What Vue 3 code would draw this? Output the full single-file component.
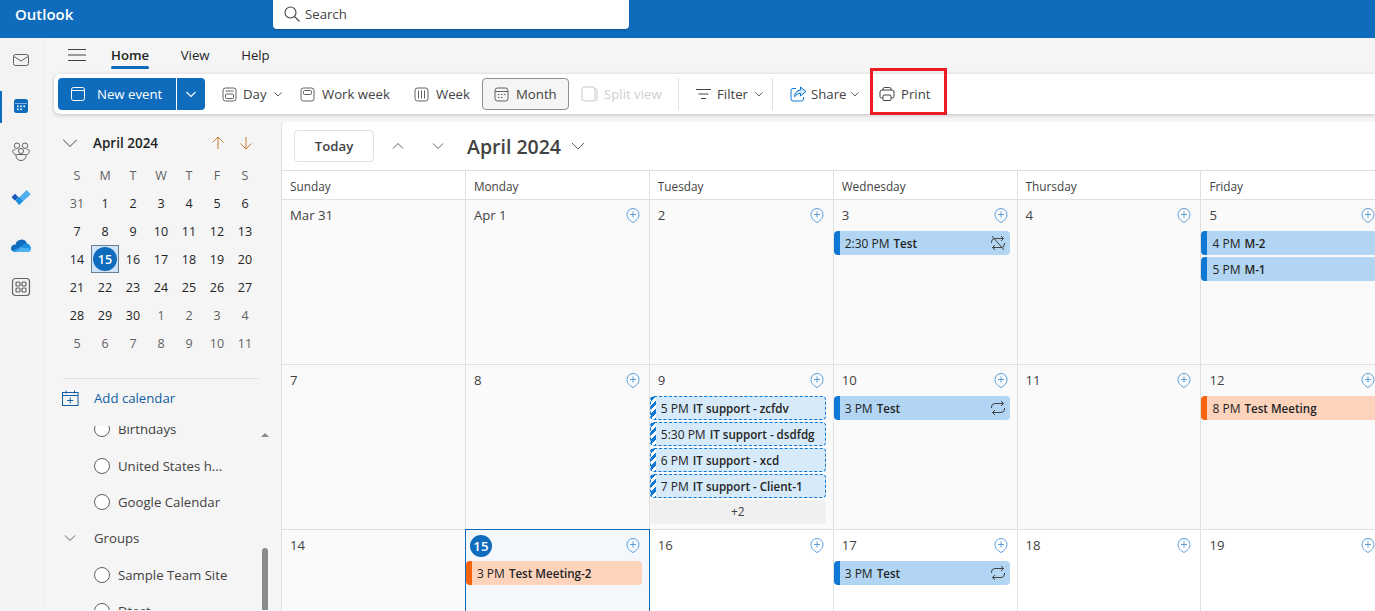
<template>
  <div class="page">
    <header class="topbar">
      <span class="brand">Outlook</span>
      <div class="search">
        <svg width="18" height="18" viewBox="0 0 18 18" fill="none" stroke="#424242" stroke-width="1.1"><circle cx="7.5" cy="7.5" r="5.5" /><path d="M11.5 11.5l5 5" /></svg>
        <span>Search</span>
      </div>
    </header>

    <div class="body">
      <nav class="rail">
        <i class="rail-active"></i>
        <svg class="rail-icon" width="20" height="20" viewBox="0 0 20 20" fill="none" stroke="#616161"><rect x="2.5" y="4.5" width="15" height="11" rx="2" /><path d="M3 6.5l7 4.5 7-4.500" /></svg>
        <svg class="rail-icon" width="20" height="20" viewBox="0 0 20 20"><rect x="3" y="3" width="14" height="14" rx="2.5" fill="#0f6cbd" /><rect x="4" y="7" width="12" height="1" fill="#7fb4e4" /><g fill="#fff"><rect x="6" y="9.500" width="1.600" height="1.600" /><rect x="9.200" y="9.500" width="1.600" height="1.600" /><rect x="12.400" y="9.500" width="1.600" height="1.600" /><rect x="6" y="12.500" width="1.600" height="1.600" /><rect x="9.200" y="12.500" width="1.600" height="1.600" /></g></svg>
        <svg class="rail-icon people" width="20" height="20" viewBox="-1 0 20 20" fill="none" stroke="#616161"><circle cx="5" cy="3.700" r="2.700" /><circle cx="13" cy="3.700" r="2.700" /><circle cx="9" cy="9" r="2.500" /><path d="M3.300 7.500H2.500C1.500 7.500 .8 8.300 .8 9.200.8 11 2 12.500 4 12.800M14.700 7.500h.8c1 0 1.700.8 1.700 1.700 0 1.800-1.200 3.300-3.200 3.600" /><path d="M4 13.500c0-.5.5-1 1-1h8c.5 0 1 .5 1 1 0 3-2 5-5 5s-5-2-5-5z" /></svg>
        <svg class="rail-icon todo" width="20" height="19" viewBox="0 0 20 19"><polygon points="8,16 19.700,5.300 15.700,1 6.500,10" fill="#50aeef" /><polygon points="4.500,11.500 8,8 12,12 8,16" fill="#1f8ee0" /><polygon points="0.500,8.300 4,4.800 7.500,8.300 4,11.800" fill="#185abd" /></svg>
        <svg class="rail-icon cloud" width="20" height="14" viewBox="0 0 20 14"><path d="M16 5.500A6 6 0 0 0 4.500 6.500C2 6.500 0 8 0 10.300 0 11.500.5 12.500 1.300 13L11 8.500z" fill="#0f6cbd" /><path d="M16 5.500c-2.500-.2-4 .8-5.500 2.500L1.300 13c.5.5 1.500 1 2.700 1h13c1.700 0 3-1.300 3-3.200 0-2.800-2-5.100-4-5.300z" fill="#1f8fe0" /><path d="M4 14h13c1.500 0 3-1.300 3-3.200L10 9.500z" fill="#4fb2f0" /></svg>
        <svg class="rail-icon" width="20" height="20" viewBox="0 0 20 20" fill="none" stroke="#616161" stroke-width="1.200"><rect x="1.500" y="1.500" width="17" height="17" rx="3" /><rect x="5" y="5" width="4" height="4" rx="1" /><rect x="11" y="5" width="4" height="4" rx="1" /><rect x="5" y="11" width="4" height="4" rx="1" /><rect x="11" y="11" width="4" height="4" rx="1" /></svg>
      </nav>

      <div class="main">
        <div class="tabs">
          <svg class="burger" width="18" height="14" viewBox="0 0 18 14" stroke="#424242"><path d="M0 1.500h18M0 7h18M0 12.500h18" /></svg>
          <span class="tab active">Home</span>
          <span class="tab">View</span>
          <span class="tab">Help</span>
        </div>

        <div class="ribbon">
          <div class="new-event">
            <button class="new-main">
              <svg width="16" height="16" viewBox="0 0 16 16" fill="none" stroke="#fff"><rect x="1.500" y="1.500" width="13" height="13" rx="2" /><path d="M1.500 4.500h13" /></svg>
              <span>New event</span>
            </button>
            <button class="new-more">
              <svg width="12" height="12" viewBox="0 0 12 12" fill="none" stroke="#fff" stroke-width="1.100"><path d="M1.500 4l4.500 4.500L10.500 4" /></svg>
            </button>
          </div>

          <div class="rb rb-day">
            <svg width="15" height="15" viewBox="0 0 15 15" fill="none" stroke="#616161"><rect x="1" y="1" width="13" height="13" rx="2.500" /><rect x="3.500" y="7" width="8" height="4.500" rx="1" /><path d="M3.500 4h8" /></svg>
            <span>Day</span>
            <svg class="chev" width="10" height="10" viewBox="0 0 10 10" fill="none" stroke="#616161"><path d="M1.500 3.500L5 7l3.500-3.500" /></svg>
          </div>
          <div class="rb rb-ww">
            <svg width="15" height="15" viewBox="0 0 15 15" fill="none" stroke="#616161"><rect x="1" y="1" width="13" height="13" rx="2.500" /><rect x="3.500" y="3.500" width="8" height="4" rx="1" /></svg>
            <span>Work week</span>
          </div>
          <div class="rb rb-week">
            <svg width="15" height="15" viewBox="0 0 15 15" fill="none" stroke="#616161"><rect x="1" y="1" width="13" height="13" rx="2.500" /><path d="M4.500 3.500v8M7.500 3.500v8M10.500 3.500v8" /></svg>
            <span>Week</span>
          </div>
          <div class="rb rb-month">
            <svg width="15" height="15" viewBox="0 0 15 15" fill="none" stroke="#616161"><rect x="1" y="1" width="13" height="13" rx="2.500" /><path d="M1 4.500h13" /><path d="M4 7.500h1.500M7 7.500h1.500M10 7.500h1.500M4 10.500h1.500M7 10.500h1.500" /></svg>
            <span>Month</span>
          </div>
          <div class="rb rb-split">
            <svg width="17" height="17" viewBox="0 0 17 17" fill="none" stroke="#c8c8c8"><rect x="1" y="1" width="13" height="14" rx="2.500" /><path d="M14 3h.5c1 0 1.500.8 1.500 1.500v8c0 1.500-.8 2.500-2 2.500" /></svg>
            <span>Split view</span>
          </div>
          <i class="rb-line"></i>
          <div class="rb rb-filter">
            <svg width="15" height="12" viewBox="0 0 15 12" stroke="#424242"><path d="M0 1.500h15M2.500 6h10M5 10.500h5" /></svg>
            <span>Filter</span>
            <svg class="chev" width="10" height="10" viewBox="0 0 10 10" fill="none" stroke="#616161"><path d="M1.500 3.500L5 7l3.500-3.500" /></svg>
          </div>
          <i class="rb-line"></i>
          <div class="rb rb-share">
            <svg width="17" height="16" viewBox="0 0 17 16" fill="none" stroke="#0f78d4"><path d="M6 2.500H3a2 2 0 0 0-2 2v8.500a2 2 0 0 0 2 2h8.500a2 2 0 0 0 2-2v-2" /><path d="M10.500 1l5.500 4.500-5.500 4.500V7.500C8 7.500 6 8.500 4.500 11c0-4 2-6.500 6-7z" fill="#cfe4f7" /></svg>
            <span>Share</span>
            <svg class="chev" width="10" height="10" viewBox="0 0 10 10" fill="none" stroke="#616161"><path d="M1.500 3.500L5 7l3.500-3.500" /></svg>
          </div>
          <div class="rb rb-print">
            <svg width="16" height="16" viewBox="0 0 16 16" fill="none" stroke="#424242"><path d="M4 4V3a1.500 1.500 0 0 1 1.500-1.500h5A1.500 1.500 0 0 1 12 3v1" /><path d="M4 12H2.500a1.500 1.500 0 0 1-1.500-1.500V6a2 2 0 0 1 2-2h10a2 2 0 0 1 2 2v4.500a1.500 1.500 0 0 1-1.500 1.500H12" /><rect x="4" y="9" width="8" height="5.500" rx="1" /></svg>
            <span>Print</span>
          </div>
        </div>

        <div class="content">
          <aside class="side">
            <div class="mini-head">
              <svg width="14" height="14" viewBox="0 0 14 14" fill="none" stroke="#424242"><path d="M0 3.500l7 7 7-7" /></svg>
              <span class="mini-title">April 2024</span>
              <svg class="mini-up" width="14" height="14" viewBox="0 0 14 14" fill="none" stroke="#c97f35"><path d="M7 13V1M1.500 6.500L7 1l5.500 5.500" /></svg>
              <svg class="mini-down" width="14" height="14" viewBox="0 0 14 14" fill="none" stroke="#c97f35"><path d="M7 1v12M1.500 7.500L7 13l5.500-5.500" /></svg>
            </div>
            <div class="mini-grid">
              <span v-for="(d, i) in miniHead" :key="'h' + i" class="mini-dow">{{ d }}</span>
              <span v-for="(d, i) in miniDays" :key="i" class="mini-day" :class="{ other: d.other, today: d.n === 15 && !d.other }">
                <b v-if="d.n === 15 && !d.other">15</b>
                <template v-else>{{ d.n }}</template>
              </span>
            </div>
            <div class="side-line"></div>
            <div class="add-cal">
              <svg width="17" height="16" viewBox="0 0 17 16" fill="none" stroke="#115ea3"><rect x=".5" y="2.500" width="15.500" height="13" /><path d="M.5 5.500h15.500M4 .5v3M12.500 .5v3M8.200 7.500v6M5.200 10.500h6" /></svg>
              <span>Add calendar</span>
            </div>
            <div class="cal-list">
              <div class="cal-scroll">
                <div v-for="c in calList" :key="c.name" class="cal-row" :class="{ group: c.group }">
                  <svg v-if="c.group" class="group-chev" width="12" height="12" viewBox="0 0 12 12" fill="none" stroke="#616161"><path d="M1 3.500l5 5 5-5" /></svg>
                  <i v-else class="radio"></i>
                  <span>{{ c.name }}</span>
                </div>
              </div>
              <i class="scroll-up"></i>
              <i class="scroll-thumb"></i>
            </div>
          </aside>

          <section class="surface">
            <div class="cal-tools">
              <button class="today-btn">Today</button>
              <svg class="nav-up" width="12" height="12" viewBox="0 0 12 12" fill="none" stroke="#616161"><path d="M1 8.500l5-5 5 5" /></svg>
              <svg class="nav-down" width="12" height="12" viewBox="0 0 12 12" fill="none" stroke="#616161"><path d="M1 3.500l5 5 5-5" /></svg>
              <span class="cal-title">April 2024</span>
              <svg class="title-chev" width="14" height="14" viewBox="0 0 14 14" fill="none" stroke="#616161"><path d="M1 4l6 6 6-6" /></svg>
            </div>
            <div class="dow-row">
              <span v-for="d in weekDays" :key="d" class="dow">{{ d }}</span>
            </div>
            <div class="grid">
              <div v-for="(cell, i) in cells" :key="cell.label" class="cell" :class="{ past: cell.past, current: cell.today }">
                <div class="cell-head">
                  <span v-if="cell.today" class="today-num">{{ cell.label }}</span>
                  <span v-else class="num">{{ cell.label }}</span>
                  <!-- sunday column has no add button -->
                  <svg v-if="i % 7 !== 0" class="pin" width="14" height="17" viewBox="0 0 14 17" fill="none" stroke="#5b9fdc"><path d="M7 15.500C4 13.800 1 11.500 1 7.500a6 6 0 0 1 12 0c0 4-3 6.300-6 8z" /><path d="M7 4.500v6M4 7.500h6" /></svg>
                </div>
                <div v-for="e in cell.events" :key="e.time + e.title" class="event" :class="e.kind">
                  <span class="ev-time">{{ e.time }}</span>
                  <span class="ev-title">{{ e.title }}</span>
                  <svg v-if="e.icon" class="ev-icon" width="16" height="16" viewBox="0 0 16 16" fill="none" stroke="#424242">
                    <path d="M11 1l2.500 2.500L11 6M13.500 3.500H5A3.500 3.500 0 0 0 1.500 7v1M5 15l-2.500-2.500L5 10M2.500 12.500H11A3.500 3.500 0 0 0 14.500 9V8" />
                    <path v-if="e.icon === 'off'" d="M2 1l12 14" />
                  </svg>
                </div>
                <div v-if="cell.more" class="more">{{ cell.more }}</div>
              </div>
            </div>
          </section>
        </div>
      </div>
    </div>

    <i class="red-box"></i>
  </div>
</template>

<script setup>
const miniHead = ['S', 'M', 'T', 'W', 'T', 'F', 'S']
const weekDays = ['Sunday', 'Monday', 'Tuesday', 'Wednesday', 'Thursday', 'Friday', 'Saturday']

const miniDays = []
miniDays.push({ n: 31, other: true })
for (let n = 1; n <= 30; n++) miniDays.push({ n, other: false })
for (let n = 1; n <= 11; n++) miniDays.push({ n, other: true })

const calList = [
  { name: 'Birthdays' },
  { name: 'United States h...' },
  { name: 'Google Calendar' },
  { name: 'Groups', group: true },
  { name: 'Sample Team Site' },
  { name: 'Dtest' },
]

const blue = (time, title, icon) => ({ time, title, icon, kind: 'blue' })
const orange = (time, title) => ({ time, title, kind: 'orange' })
const tentative = (time, title) => ({ time, title, kind: 'tentative' })

const cells = [
  { label: 'Mar 31', past: true },
  { label: 'Apr 1', past: true },
  { label: '2', past: true },
  { label: '3', past: true, events: [blue('2:30 PM', 'Test', 'off')] },
  { label: '4', past: true },
  { label: '5', past: true, events: [blue('4 PM', 'M-2'), blue('5 PM', 'M-1')] },
  { label: '6', past: true },
  { label: '7', past: true },
  { label: '8', past: true },
  {
    label: '9',
    past: true,
    more: '+2',
    events: [
      tentative('5 PM', 'IT support - zcfdv'),
      tentative('5:30 PM', 'IT support - dsdfdg'),
      tentative('6 PM', 'IT support - xcd'),
      tentative('7 PM', 'IT support - Client-1'),
    ],
  },
  { label: '10', past: true, events: [blue('3 PM', 'Test', 'repeat')] },
  { label: '11', past: true },
  { label: '12', past: true, events: [orange('8 PM', 'Test Meeting')] },
  { label: '13', past: true },
  { label: '14', past: true },
  { label: '15', today: true, events: [orange('3 PM', 'Test Meeting-2')] },
  { label: '16' },
  { label: '17', events: [blue('3 PM', 'Test', 'repeat')] },
  { label: '18' },
  { label: '19' },
  { label: '20' },
]
</script>

<style>
html,
body {
  margin: 0;
  overflow: hidden;
}
</style>

<style scoped>
.page {
  position: relative;
  width: 1375px;
  height: 611px;
  overflow: hidden;
  background: #f5f5f5;
  font-family: "Open Sans", "Noto Sans", sans-serif;
  font-size: 13.2px;
  color: #242424;
}

.topbar {
  display: flex;
  height: 38px;
  background: #0f6cbd;
}

.brand {
  width: 258px;
  padding: 4px 0 0 15px;
  font-size: 15px;
  font-weight: 600;
  color: #fff;
}

.search {
  display: flex;
  align-items: center;
  gap: 4px;
  width: 346px;
  height: 28px;
  padding: 0 0 1px 10px;
  background: #fff;
  border-radius: 0 0 4px 4px;
  box-shadow: 0 1px 2px rgba(0, 0, 0, 0.25);
  color: #424242;
}

.body {
  display: flex;
  height: 573px;
}

.rail {
  box-sizing: border-box;
  position: relative;
  display: flex;
  flex-direction: column;
  align-items: center;
  width: 46px;
  padding: 12px 4px 0 0;
  background: #f3f3f3;
  border-right: 1px solid #f0f0f0;
  flex-shrink: 0;
}

.rail-active {
  position: absolute;
  left: 0;
  top: 53px;
  width: 2px;
  height: 32px;
  background: #0f6cbd;
}

.rail-icon {
  flex-shrink: 0;
  margin-bottom: 26px;
}

.rail-icon.people {
  margin-bottom: 27px;
}

.rail-icon.todo {
  margin-bottom: 30px;
}

.rail-icon.cloud {
  margin-bottom: 25px;
}

.main {
  flex: 1;
  min-width: 0;
}

.tabs {
  display: flex;
  align-items: center;
  height: 34px;
  padding-left: 22px;
}

.burger {
  margin-right: 25px;
}

.tab {
  position: relative;
  margin-right: 31.600px;
  line-height: 34px;
}

.tab.active {
  font-weight: 600;
}

.tab.active::after {
  content: "";
  position: absolute;
  left: 0;
  right: 0;
  bottom: 3px;
  height: 3px;
  border-radius: 2px;
  background: #0f6cbd;
}

.ribbon {
  display: flex;
  align-items: center;
  height: 40px;
  margin: 2px 0 0 8px;
  padding-left: 4px;
  background: #fff;
  border-radius: 6px 0 0 6px;
  box-shadow: 0 1px 4px rgba(0, 0, 0, 0.22);
  color: #424242;
}

.new-event {
  display: flex;
  gap: 1px;
  height: 32px;
  margin-right: 17px;
}

.new-event button {
  display: flex;
  align-items: center;
  border: 0;
  padding: 0;
  background: #0f6cbd;
  color: #fff;
  font: inherit;
}

.new-main {
  gap: 11px;
  width: 118px;
  padding-left: 12px !important;
  border-radius: 4px 0 0 4px;
}

.new-more {
  justify-content: center;
  width: 28px;
  border-radius: 0 4px 4px 0 !important;
}

.rb {
  display: flex;
  align-items: center;
  flex-shrink: 0;
  gap: 7px;
  height: 32px;
  white-space: nowrap;
}

.rb-day {
  width: 78px;
  gap: 6px;
}

.rb-ww {
  width: 114px;
}

.rb-week {
  width: 68px;
}

.rb-month {
  box-sizing: border-box;
  width: 87px;
  padding-left: 11px;
  margin-right: 12px;
  background: #f5f5f5;
  border: 1px solid #8f8f8f;
  border-radius: 4px;
}

.rb-split {
  width: 97px;
  gap: 6px;
  color: #cfcfcf;
}

.rb-line {
  flex-shrink: 0;
  width: 1px;
  height: 32px;
  background: #e0e0e0;
}

.rb-filter {
  width: 76px;
  padding-left: 17px;
  gap: 6px;
}

.rb-share {
  width: 72px;
  padding-left: 17px;
  gap: 4px;
  margin-right: 17px;
}

.rb-print {
  gap: 6px;
}

.content {
  display: flex;
  margin-top: 8px;
  height: 489px;
}

.side {
  width: 235px;
  flex-shrink: 0;
}

.mini-head {
  display: flex;
  align-items: center;
  height: 26px;
  margin-top: 8px;
  padding-left: 17px;
  font-weight: 600;
}

.mini-title {
  width: 118px;
  margin-left: 16px;
  font-size: 13.500px;
}

.mini-down {
  margin-left: 14px;
}

.mini-grid {
  display: grid;
  grid-template-columns: repeat(7, 28px);
  grid-auto-rows: 28px;
  margin: 5px 0 0 17px;
  font-size: 12.500px;
}

.mini-dow,
.mini-day {
  display: flex;
  align-items: center;
  justify-content: center;
}

.mini-dow {
  color: #616161;
}

.mini-day.other {
  color: #616161;
}

.mini-day.today {
  box-sizing: border-box;
  background: #cfe4fa;
  border: 1px solid #6b7f93;
}

.mini-day.today b {
  display: flex;
  align-items: center;
  justify-content: center;
  width: 24px;
  height: 24px;
  border-radius: 50%;
  background: #0f6cbd;
  color: #fff;
  font-weight: 600;
}

.side-line {
  height: 1px;
  margin: 21px 23px 0 17px;
  background: #e0e0e0;
}

.add-cal {
  display: flex;
  align-items: center;
  gap: 15px;
  height: 38px;
  margin-bottom: 9px;
  padding-left: 16px;
  color: #115ea3;
}

.cal-list {
  position: relative;
  height: 184px;
  overflow: hidden;
  color: #424242;
}

.cal-scroll {
  margin-top: -15px;
}

.cal-row {
  display: flex;
  align-items: center;
  gap: 8px;
  height: 36.400px;
  padding-left: 48px;
}

.cal-row.group {
  gap: 18px;
  padding-left: 18px;
}

.radio {
  width: 14px;
  height: 14px;
  border: 1px solid #616161;
  border-radius: 50%;
  background: #fff;
}

.scroll-up {
  position: absolute;
  left: 215px;
  top: 7px;
  border: 4px solid transparent;
  border-top: 0;
  border-bottom: 4px solid #8a8a8a;
}

.scroll-thumb {
  position: absolute;
  left: 216px;
  top: 122px;
  width: 6px;
  height: 70px;
  border-radius: 3px;
  background: #8a8a8a;
}

.surface {
  flex: 1;
  min-width: 0;
  margin-left: 1px;
  background: #fff;
  border-radius: 4px 0 0 0;
  overflow: hidden;
  box-shadow: -1px 0 0 #e0e0e0;
}

.cal-tools {
  display: flex;
  align-items: center;
  height: 48px;
  padding-left: 12px;
}

.today-btn {
  box-sizing: border-box;
  width: 80px;
  height: 32px;
  margin-right: 18px;
  background: #fff;
  border: 1px solid #e0e0e0;
  border-radius: 4px;
  font: inherit;
  font-weight: 600;
  color: #424242;
}

.nav-down {
  margin-left: 28px;
}

.cal-title {
  margin: 0 10px 0 23px;
  font-size: 19.500px;
  font-weight: 600;
  color: #424242;
}

.dow-row {
  box-sizing: border-box;
  display: grid;
  grid-template-columns: repeat(7, 183.900px);
  height: 30px;
  border-top: 1px solid #e0e0e0;
  border-bottom: 1px solid #e0e0e0;
}

.dow {
  padding-left: 8px;
  line-height: 31px;
  font-size: 11.800px;
  color: #424242;
  border-right: 1px solid #e0e0e0;
}

.grid {
  display: grid;
  grid-template-columns: repeat(7, 183.900px);
  grid-auto-rows: 165px;
}

.cell {
  box-sizing: border-box;
  position: relative;
  border-right: 1px solid #e0e0e0;
  border-bottom: 1px solid #e0e0e0;
}

.cell.past {
  background: #fafafa;
}

.cell.current {
  background: #f4f8fd;
}

.cell.current::before {
  content: "";
  position: absolute;
  inset: -1px -1px 0 -1px;
  border: 1px solid #0f6cbd;
}

.cell-head {
  display: flex;
  align-items: center;
  justify-content: space-between;
  height: 31px;
  padding: 0 9px 0 8px;
  color: #424242;
}

.num {
  margin-top: -2px;
}

.today-num {
  position: relative;
  display: flex;
  align-items: center;
  justify-content: center;
  width: 22px;
  height: 22px;
  margin-left: -4px;
  border-radius: 50%;
  background: #0f6cbd;
  color: #fff;
  font-weight: 600;
}

.event {
  box-sizing: border-box;
  position: relative;
  display: flex;
  align-items: center;
  gap: 4px;
  width: 176px;
  height: 24px;
  margin-bottom: 2px;
  padding: 0 4px 0 11px;
  border-radius: 4px;
  font-size: 12px;
  white-space: nowrap;
  overflow: hidden;
  background-repeat: no-repeat;
  color: #242424;
}

.event.blue {
  background-color: #b1d5f2;
  background-image: linear-gradient(#0f78d4, #0f78d4);
  background-size: 6px 100%;
}

.event.orange {
  background-color: #fdd3bc;
  background-image: linear-gradient(#f7630c, #f7630c);
  background-size: 6px 100%;
}

.event.tentative {
  background-color: #d6eaf9;
  background-image: repeating-linear-gradient(135deg, #0f78d4 0 3px, #fff 3px 6px);
  background-size: 5px 100%;
  border: 1px dashed #0f78d4;
  padding-left: 10px;
}

.ev-title {
  font-size: 11.600px;
  font-weight: 600;
}

.ev-icon {
  margin-left: auto;
  flex-shrink: 0;
}

.more {
  width: 176px;
  height: 24px;
  line-height: 24px;
  text-align: center;
  font-size: 12px;
  background: #f0f0f0;
  border-radius: 4px;
  color: #424242;
}

.red-box {
  position: absolute;
  left: 870px;
  top: 68px;
  width: 71px;
  height: 41px;
  border: 3px solid #ed1c24;
}
</style>
